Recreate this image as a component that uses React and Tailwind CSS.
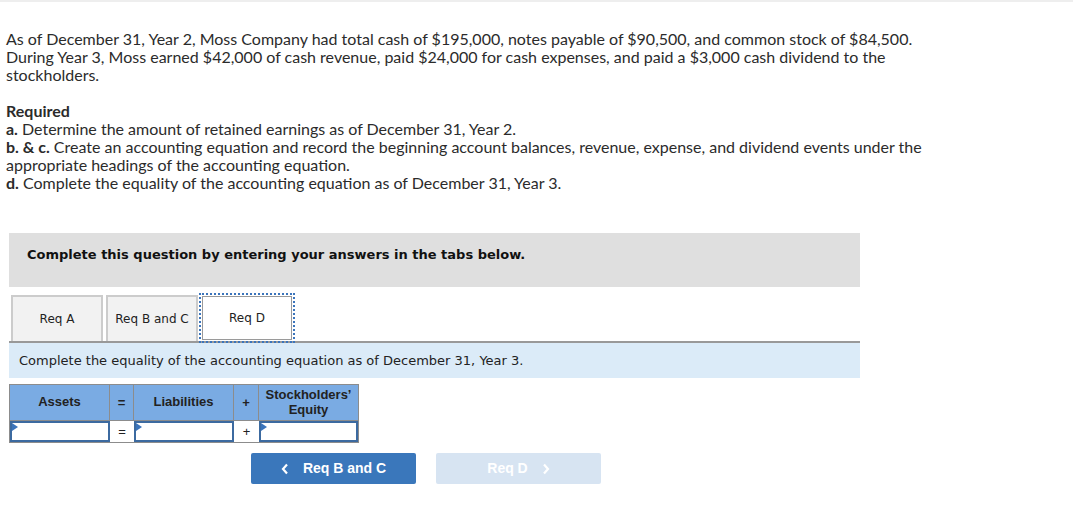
import React from "react";

const Tri = () => (
  <svg className="absolute left-0 top-0" width="6" height="8" viewBox="0 0 6 8">
    <path d="M0 0 L6 4 L0 8 Z" fill="#3b74bb" />
  </svg>
);

export default function App() {
  return (
    <div className="w-[1073px] h-[511px] bg-white relative overflow-hidden">
      <div className="h-[2px] bg-[#eeeeee]" />
      <div
        className="pl-[6px] pt-[28px] text-[16px] leading-[18px] text-[#2b2b2b]"
        style={{ fontFamily: "Lato, 'Liberation Sans', sans-serif" }}
      >
        <p>
          As of December 31, Year 2, Moss Company had total cash of $195,000, notes payable of $90,500, and common stock of $84,500.
          <br />
          During Year 3, Moss earned $42,000 of cash revenue, paid $24,000 for cash expenses, and paid a $3,000 cash dividend to the
          <br />
          stockholders.
        </p>
        <p className="mt-[18px]">
          <b>Required</b>
          <br />
          <b>a.</b> Determine the amount of retained earnings as of December 31, Year 2.
          <br />
          <b>b. &amp; c.</b> Create an accounting equation and record the beginning account balances, revenue, expense, and dividend events under the
          <br />
          appropriate headings of the accounting equation.
          <br />
          <b>d.</b> Complete the equality of the accounting equation as of December 31, Year 3.
        </p>
      </div>

      <div className="ml-[9px] w-[851px] mt-[41px]" style={{ fontFamily: "'DejaVu Sans', Verdana, sans-serif" }}>
        <div className="h-[54px] bg-[#dfdfdf] pt-[14px] pl-[18px] text-[13px] leading-[16px] font-bold text-[#111]">
          Complete this question by entering your answers in the tabs below.
        </div>
        <div className="h-[56px] flex items-end pl-[2px] border-b-2 border-[#999999] gap-[3px]">
          <div className="w-[92px] h-[46px] bg-[#f2f2f2] border-2 border-b-0 border-[#cccccc] flex items-center justify-center text-[12px] text-[#222]">
            Req A
          </div>
          <div className="w-[92px] h-[46px] bg-[#f2f2f2] border-2 border-b-0 border-[#cccccc] flex items-center justify-center text-[12px] text-[#222]">
            Req B and C
          </div>
          <div className="w-[96px] h-[50px] -mb-[2px] -ml-[2px] border-2 border-dotted border-[#3b74bb] p-px">
            <div className="w-full h-full bg-white border border-[#9a9a9a] flex items-center justify-center text-[12px] text-[#222]">
              Req D
            </div>
          </div>
        </div>
        <div className="h-[35px] bg-[#dbebf8] flex items-center pl-[10px] text-[13px] text-[#222]">
          Complete the equality of the accounting equation as of December 31, Year 3.
        </div>

        <div className="mt-[6px] w-[350px] border border-[#8c8c8c]" style={{ fontFamily: "'Liberation Sans', Arial, sans-serif" }}>
          <div className="flex h-[35px] bg-[#7aabe3] text-[#222] text-[13px] font-bold">
            <div className="w-[100px] flex items-center justify-center border-r border-[#8c8c8c] -mt-[1px]">Assets</div>
            <div className="w-[24px] flex items-center justify-center border-r border-[#8c8c8c]">=</div>
            <div className="w-[100px] flex items-center justify-center border-r border-[#8c8c8c] -mt-[1px]">Liabilities</div>
            <div className="w-[25px] flex items-center justify-center border-r border-[#8c8c8c]">+</div>
            <div className="flex-1 flex items-center justify-center text-center leading-[15px] -mt-[2px]">
              Stockholders’
              <br />
              Equity
            </div>
          </div>
          <div className="flex h-[22px] border-t border-[#8c8c8c] bg-white text-[13px] text-[#222]">
            <div className="w-[100px] relative border-2 border-[#3c6aa0]">
              <Tri />
            </div>
            <div className="w-[24px] flex items-center justify-center">=</div>
            <div className="w-[100px] relative border-2 border-[#3c6aa0]">
              <Tri />
            </div>
            <div className="w-[25px] flex items-center justify-center">+</div>
            <div className="flex-1 relative border-2 border-[#3c6aa0]">
              <Tri />
            </div>
          </div>
        </div>

        <div className="mt-[10px] ml-[242px] flex gap-[20px]" style={{ fontFamily: "'Liberation Sans', Arial, sans-serif" }}>
          <div className="w-[165px] h-[31px] rounded-[2px] bg-[#3a77bb] flex items-center justify-center text-white text-[14px] font-bold">
            <svg width="8" height="12" viewBox="0 0 8 12" className="mr-[14px]">
              <path d="M6 1.5 L2 6 L6 10.5" stroke="white" strokeWidth="2.2" fill="none" />
            </svg>
            Req B and C
          </div>
          <div className="w-[165px] h-[31px] rounded-[2px] bg-[#d7e4f2] flex items-center justify-center text-white text-[14px] font-bold">
            Req D
            <svg width="8" height="12" viewBox="0 0 8 12" className="ml-[14px]">
              <path d="M2 1.5 L6 6 L2 10.5" stroke="white" strokeWidth="2.2" fill="none" />
            </svg>
          </div>
        </div>
      </div>
    </div>
  );
}
